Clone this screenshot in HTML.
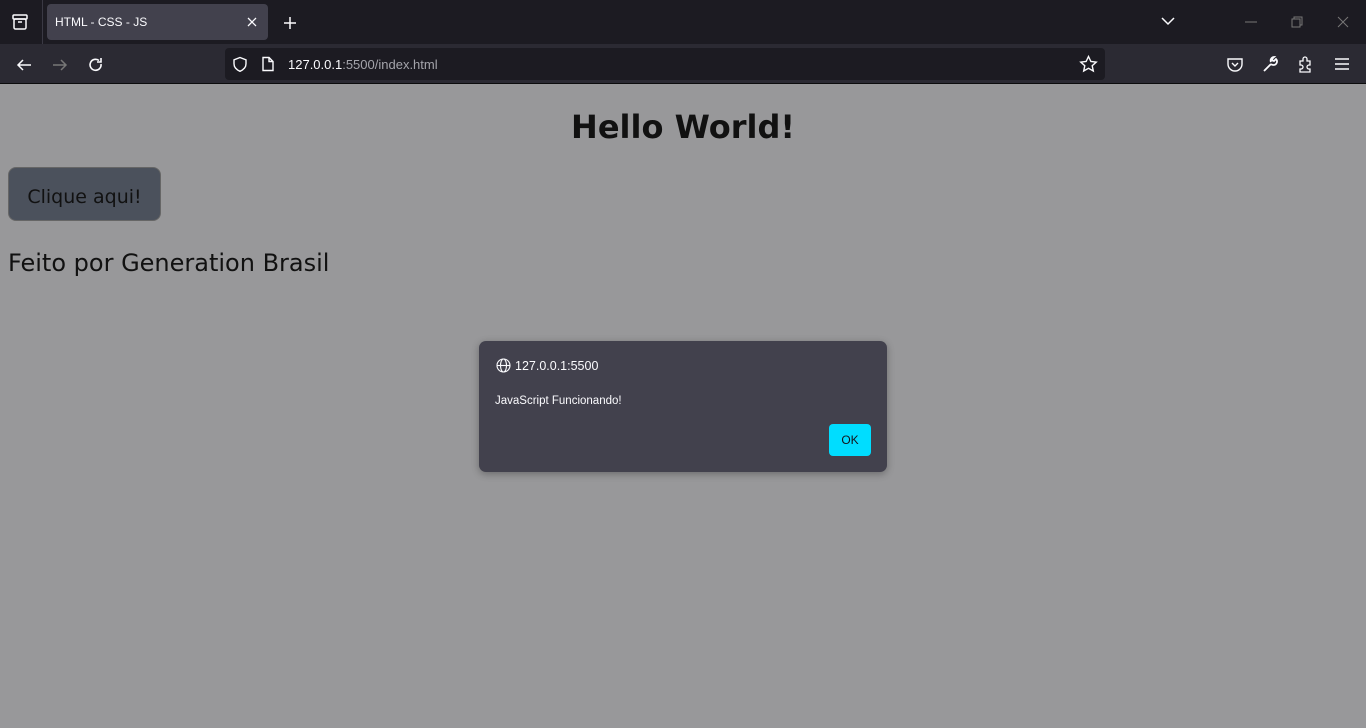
<!DOCTYPE html>
<html><head><meta charset="utf-8"><style>
*{margin:0;padding:0;box-sizing:border-box}
body{width:1366px;height:728px;overflow:hidden;background:#98989a;font-family:"Liberation Sans",sans-serif;position:relative}
.tabbar{position:absolute;left:0;top:0;width:1366px;height:44px;background:#1c1b22}
.nav{position:absolute;left:0;top:44px;width:1366px;height:40px;background:#2b2a33;border-bottom:1px solid #0c0c0d}
.tab{position:absolute;left:47px;top:4px;width:221px;height:36px;background:#42414d;border-radius:4px;color:#fbfbfe;font-size:12px;line-height:36px;padding-left:8px}
.url{position:absolute;left:225px;top:48px;width:880px;height:32px;background:#1c1b22;border-radius:4px}
.urltext{position:absolute;left:288px;top:57px;font-size:13px;color:#fbfbfe}
.urltext span{color:#a4a4ab}
svg{position:absolute}
h1{position:absolute;left:0;width:1366px;top:108px;text-align:center;font-family:"DejaVu Sans",sans-serif;font-size:32px;font-weight:bold;color:#111}
.btn{position:absolute;left:8px;top:167px;width:153px;height:54px;background:#4b515c;border:1px solid #666;border-radius:8px;font-family:"DejaVu Sans",sans-serif;font-size:19px;color:#111;text-align:center;line-height:58px}
.feito{position:absolute;left:8px;top:249px;font-family:"DejaVu Sans",sans-serif;font-size:24px;color:#111}
.dlg{position:absolute;left:479px;top:341px;width:408px;height:131px;background:#42414d;border-radius:7px;box-shadow:0 2px 8px rgba(0,0,0,.3);color:#fbfbfe;font-size:12px}
.ok{position:absolute;left:350px;top:83px;width:42px;height:32px;background:#00ddff;border-radius:4px;color:#15141a;font-size:12px;text-align:center;line-height:32px}
</style></head><body>
<div class="tabbar"></div>
<div style="position:absolute;left:42px;top:0;width:1px;height:44px;background:#3a3944"></div>
<svg style="left:11px;top:13px" width="18" height="18" fill="none" stroke="#fbfbfe" stroke-width="1.5"><rect x="2" y="2" width="14" height="4" rx="1"/><rect x="3" y="6" width="12" height="10" rx="1.5"/><path d="M7 9h4"/></svg>
<div class="tab">HTML - CSS - JS</div>
<svg style="left:246px;top:16px" width="12" height="12" stroke="#fbfbfe" stroke-width="1.3"><path d="M2 2l8 8M10 2l-8 8"/></svg>
<svg style="left:282px;top:15px" width="16" height="16" stroke="#fbfbfe" stroke-width="1.5"><path d="M8 2v12M2 8h12"/></svg>
<svg style="left:1160px;top:15px" width="16" height="12" fill="none" stroke="#fbfbfe" stroke-width="1.5"><path d="M2 3l6 6 6-6"/></svg>
<svg style="left:1244px;top:15px" width="14" height="14" stroke="#777" stroke-width="1"><path d="M1 7h12"/></svg>
<svg style="left:1290px;top:15px" width="14" height="14" fill="none" stroke="#777" stroke-width="1"><rect x="2" y="4" width="8" height="8"/><path d="M4 4V2h8v8h-2"/></svg>
<svg style="left:1336px;top:15px" width="14" height="14" stroke="#777" stroke-width="1"><path d="M2 2l10 10M12 2L2 12"/></svg>
<div class="nav"></div>
<svg style="left:15px;top:56px" width="18" height="18" fill="none" stroke="#fbfbfe" stroke-width="1.5"><path d="M16 9H3M8 4L3 9l5 5"/></svg>
<svg style="left:51px;top:56px" width="18" height="18" fill="none" stroke="#777" stroke-width="1.5"><path d="M2 9h13M10 4l5 5-5 5"/></svg>
<svg style="left:87px;top:56px" width="18" height="18" fill="none" stroke="#fbfbfe" stroke-width="1.6"><path d="M14 8A5.5 5.5 0 1 1 12 4.5"/><path d="M14 2v4h-4"/></svg>
<div class="url"></div>
<svg style="left:232px;top:56px" width="16" height="17" fill="none" stroke="#fbfbfe" stroke-width="1.4"><path d="M8 1.5l6 2.3v4c0 3.5-2.5 6-6 7.5-3.5-1.5-6-4-6-7.5v-4z"/></svg>
<svg style="left:261px;top:56px" width="14" height="16" fill="none" stroke="#fbfbfe" stroke-width="1.4"><path d="M2 1.5h6l4 4v9H2z M8 1.5v4h4"/></svg>
<div class="urltext">127.0.0.1<span>:5500/index.html</span></div>
<svg style="left:1079px;top:55px" width="19" height="18" fill="none" stroke="#fbfbfe" stroke-width="1.4"><path d="M9.5 1.5l2.4 5 5.3.6-4 3.6 1.1 5.3-4.8-2.7-4.8 2.7 1.1-5.3-4-3.6 5.3-.6z"/></svg>
<svg style="left:1226px;top:56px" width="18" height="17" fill="none" stroke="#fbfbfe" stroke-width="1.4"><path d="M2 3h14v5a7 7 0 0 1-14 0z"/><path d="M6 7l3 3 3-3"/></svg>
<svg style="left:1262px;top:56px" width="17" height="17" fill="none" stroke="#fbfbfe" stroke-width="1.8"><path d="M2 15l7-7M9 8a3.5 3.5 0 0 0 5-5l-2 2-1.5-.5L10 3l2-2a3.5 3.5 0 0 0-3 5"/></svg>
<svg style="left:1297px;top:55px" width="18" height="19" fill="none" stroke="#fbfbfe" stroke-width="1.3"><path d="M3 6h3V4a2 2 0 0 1 4 0v2h3v4h-1a2 2 0 0 0 0 4h1v3H3v-3h1a2 2 0 0 0 0-4H3z"/></svg>
<svg style="left:1334px;top:57px" width="16" height="14" stroke="#fbfbfe" stroke-width="1.4"><path d="M1 2h14M1 7h14M1 12h14"/></svg>

<h1>Hello World!</h1>
<div class="btn">Clique aqui!</div>
<div class="feito">Feito por Generation Brasil</div>

<div class="dlg">
<svg style="left:17px;top:17px" width="15" height="15" fill="none" stroke="#fbfbfe" stroke-width="1.1"><circle cx="7.5" cy="7.5" r="6.5"/><ellipse cx="7.5" cy="7.5" rx="3" ry="6.5"/><path d="M1 7.5h13"/></svg>
<div style="position:absolute;left:36px;top:18px;font-size:12.5px">127.0.0.1:5500</div>
<div style="position:absolute;left:16px;top:54px;font-size:11.5px">JavaScript Funcionando!</div>
<div class="ok">OK</div>
</div>
</body></html>
